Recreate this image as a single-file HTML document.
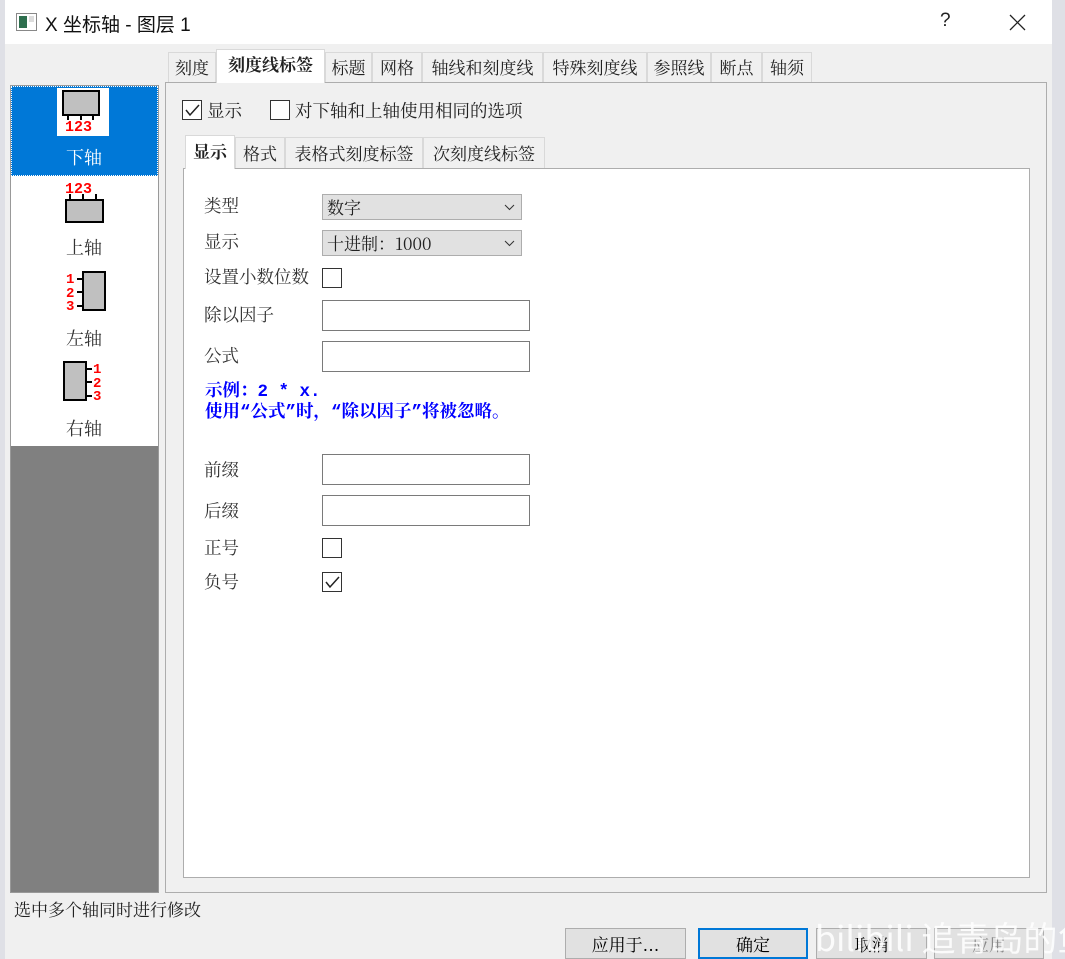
<!DOCTYPE html>
<html><head><meta charset="utf-8"><style>
*{box-sizing:border-box;margin:0;padding:0}
html,body{width:1065px;height:959px;overflow:hidden}
body{background:#dfe0e6;font-family:"Liberation Sans","Noto Sans CJK SC",sans-serif;font-size:16px;color:#000;position:relative}
.a{position:absolute}
.dlg{left:5px;top:0;width:1047px;height:959px;background:#f0f0f0}
.title{left:5px;top:0;width:1047px;height:44px;background:#fff}
.tab{position:absolute;top:52px;height:30px;border:1px solid #d9d9d9;border-bottom:none;background:#f0f0f0;font-family:"Noto Serif CJK SC","Noto Sans CJK SC",serif;font-size:17px;line-height:28px;text-align:center;color:#222;white-space:nowrap}
.tab.sel{top:49px;height:34px;background:#fff;font-weight:bold;z-index:2}
.stab{position:absolute;top:137px;height:31px;border:1px solid #d9d9d9;border-bottom:none;font-family:"Noto Serif CJK SC",serif;font-size:17px;line-height:29px;text-align:center;color:#222;white-space:nowrap}
.stab.sel{top:135px;height:34px;background:#fff;font-weight:bold;z-index:2}
.lbl{position:absolute;left:204px;font-family:"Noto Serif CJK SC",serif;font-size:17.5px;color:#333;white-space:nowrap}
.cb{position:absolute;width:20px;height:20px;border:1px solid #333;background:#fff}
.tb{position:absolute;left:322px;width:208px;height:31px;border:1px solid #7a7a7a;background:#fff}
.dd{position:absolute;left:322px;width:200px;height:26px;border:1px solid #adadad;background:#e1e1e1;font-family:"Noto Serif CJK SC",serif;font-size:17px;line-height:24px;padding-left:4px;color:#222}
.dd svg{position:absolute;right:6px;top:9px}
.btn{position:absolute;top:928px;height:31px;border:1px solid #adadad;background:#e1e1e1;text-align:center;font-family:"Noto Serif CJK SC",serif;font-size:17px;line-height:29px}
.ax{position:absolute;left:10px;width:148px;text-align:center;font-family:"Noto Serif CJK SC",serif;font-size:18px;color:#333}
</style></head><body>
<div class="a dlg"></div>
<div class="a title"></div>
<svg class="a" style="left:16px;top:13px" width="21" height="18"><rect x="0.5" y="0.5" width="20" height="17" fill="#fff" stroke="#888"/><rect x="3" y="3" width="8" height="12" fill="#2e6f4e"/><rect x="13" y="3" width="5" height="6" fill="#ddd"/></svg>
<div class="a" style="left:45px;top:10px;font-size:19px;color:#111">X 坐标轴 - 图层 1</div>
<div class="a" style="left:940px;top:10px;font-size:19px;color:#222">?</div>
<svg class="a" style="left:1009px;top:14px" width="17" height="17"><path d="M1 1L16 16M16 1L1 16" stroke="#222" stroke-width="1.3"/></svg>

<div class="tab" style="left:168px;width:48px">刻度</div>
<div class="tab sel" style="left:216px;width:109px">刻度线标签</div>
<div class="tab" style="left:325px;width:47px">标题</div>
<div class="tab" style="left:372px;width:50px">网格</div>
<div class="tab" style="left:422px;width:121px">轴线和刻度线</div>
<div class="tab" style="left:543px;width:104px">特殊刻度线</div>
<div class="tab" style="left:647px;width:64px">参照线</div>
<div class="tab" style="left:711px;width:51px">断点</div>
<div class="tab" style="left:762px;width:50px">轴须</div>
<div class="a" style="left:165px;top:82px;width:882px;height:811px;border:1px solid #adadad;background:#f0f0f0"></div>

<div class="a" style="left:10px;top:85px;width:149px;height:808px;background:#808080;border:1px solid #999"></div>
<div class="a" style="left:11px;top:86px;width:147px;height:360px;background:#fff"></div>
<div class="a" style="left:11px;top:86px;width:147px;height:90px;background:#0078d7;border:1px dotted #fff"></div>
<svg class="a" style="left:57px;top:88px" width="52" height="48"><rect width="52" height="48" fill="#fff"/><rect x="6" y="3" width="36" height="24" fill="#c0c0c0" stroke="#000" stroke-width="2"/><path d="M11 27v5M24 27v5M36 27v5" stroke="#000" stroke-width="2"/><text x="8" y="43" font-family="Liberation Mono" font-weight="bold" font-size="15" fill="#f00">123</text></svg>
<div class="ax" style="top:144px;color:#fff">下轴</div>
<svg class="a" style="left:64px;top:180px" width="42" height="44"><text x="1" y="13" font-family="Liberation Mono" font-weight="bold" font-size="15" fill="#f00">123</text><path d="M6 14v6M19 14v6M32 14v6" stroke="#000" stroke-width="2"/><rect x="2" y="20" width="37" height="22" fill="#c0c0c0" stroke="#000" stroke-width="2"/></svg>
<div class="ax" style="top:234px">上轴</div>
<svg class="a" style="left:64px;top:270px" width="44" height="44"><text x="2" y="13" font-family="Liberation Mono" font-weight="bold" font-size="14" fill="#f00">1</text><text x="2" y="27" font-family="Liberation Mono" font-weight="bold" font-size="14" fill="#f00">2</text><text x="2" y="40" font-family="Liberation Mono" font-weight="bold" font-size="14" fill="#f00">3</text><path d="M13 9h6M13 22h6M13 36h6" stroke="#000" stroke-width="2"/><rect x="19" y="2" width="22" height="38" fill="#c0c0c0" stroke="#000" stroke-width="2"/></svg>
<div class="ax" style="top:325px">左轴</div>
<svg class="a" style="left:62px;top:360px" width="46" height="44"><rect x="2" y="2" width="22" height="38" fill="#c0c0c0" stroke="#000" stroke-width="2"/><path d="M24 9h6M24 22h6M24 36h6" stroke="#000" stroke-width="2"/><text x="31" y="13" font-family="Liberation Mono" font-weight="bold" font-size="14" fill="#f00">1</text><text x="31" y="27" font-family="Liberation Mono" font-weight="bold" font-size="14" fill="#f00">2</text><text x="31" y="40" font-family="Liberation Mono" font-weight="bold" font-size="14" fill="#f00">3</text></svg>
<div class="ax" style="top:415px">右轴</div>

<div class="cb" style="left:182px;top:100px"></div>
<svg class="a" style="left:185px;top:104px" width="15" height="13"><path d="M1 6l4 5 9-10" fill="none" stroke="#222" stroke-width="1.5"/></svg>
<div class="lbl" style="left:207px;top:98px;color:#222">显示</div>
<div class="cb" style="left:270px;top:100px"></div>
<div class="lbl" style="left:295px;top:98px;color:#222">对下轴和上轴使用相同的选项</div>

<div class="stab sel" style="left:185px;width:50px">显示</div>
<div class="stab" style="left:235px;width:50px">格式</div>
<div class="stab" style="left:285px;width:138px">表格式刻度标签</div>
<div class="stab" style="left:423px;width:122px">次刻度线标签</div>
<div class="a" style="left:183px;top:168px;width:847px;height:710px;border:1px solid #adadad;background:#fff"></div>

<div class="lbl" style="top:193px">类型</div>
<div class="dd" style="top:194px">数字<svg width="11" height="7"><path d="M1 1l4.5 4.5L10 1" fill="none" stroke="#333"/></svg></div>
<div class="lbl" style="top:229px">显示</div>
<div class="dd" style="top:230px">十进制：1000<svg width="11" height="7"><path d="M1 1l4.5 4.5L10 1" fill="none" stroke="#333"/></svg></div>
<div class="lbl" style="top:264px">设置小数位数</div>
<div class="cb" style="left:322px;top:268px"></div>
<div class="lbl" style="top:302px">除以因子</div>
<div class="tb" style="top:300px"></div>
<div class="lbl" style="top:343px">公式</div>
<div class="tb" style="top:341px"></div>
<div class="a" style="left:205px;top:382px;font-family:'Liberation Mono','Noto Serif CJK SC',monospace;font-weight:bold;font-size:17.5px;line-height:21px;color:#0000ff;white-space:nowrap">示例：2 * x.<br>使用“公式”时，“除以因子”将被忽略。</div>
<div class="lbl" style="top:457px">前缀</div>
<div class="tb" style="top:454px"></div>
<div class="lbl" style="top:498px">后缀</div>
<div class="tb" style="top:495px"></div>
<div class="lbl" style="top:535px">正号</div>
<div class="cb" style="left:322px;top:538px"></div>
<div class="lbl" style="top:569px">负号</div>
<div class="cb" style="left:322px;top:572px"></div>
<svg class="a" style="left:325px;top:576px" width="15" height="13"><path d="M1 6l4 5 9-10" fill="none" stroke="#222" stroke-width="1.5"/></svg>

<div class="a" style="left:14px;top:896px;font-family:'Noto Serif CJK SC',serif;font-size:17px;color:#222">选中多个轴同时进行修改</div>
<div class="btn" style="left:565px;width:121px">应用于...</div>
<div class="btn" style="left:698px;width:110px;border:2px solid #0078d7;line-height:27px">确定</div>
<div class="btn" style="left:816px;width:111px">取消</div>
<div class="btn" style="left:934px;width:110px;color:#888">应用</div>
<div class="a" style="left:815px;top:916px;font-size:34px;color:rgba(255,255,255,0.85);font-family:'Noto Sans CJK SC',sans-serif;line-height:42px;white-space:nowrap">bilibili 追青岛的鱼</div>
</body></html>
